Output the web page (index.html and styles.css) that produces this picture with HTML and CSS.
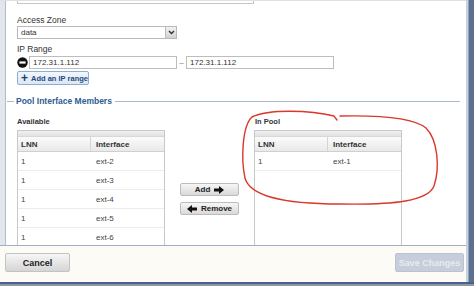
FILE: index.html
```html
<!DOCTYPE html>
<html lang="en">
<head>
    <meta charset="utf-8">
    <title>Edit Pool</title>
    <link rel="stylesheet" href="styles.css">
</head>
<body>
    <div class="screen">
        <div class="frame">
            <div class="main">
                <div class="pane">
                    <div class="gutter"></div>
                    <div class="content">
                        <div class="stub"></div>

                        <div class="label first">Access Zone</div>
                        <div class="select">
                            <span>data</span>
                            <span class="select-btn">
                                <svg width="7" height="5" viewBox="0 0 7 5"><path d="M1 1 L3.5 3.5 L6 1" fill="none" stroke="#333" stroke-width="1.4"/></svg>
                            </span>
                        </div>

                        <div class="label">IP Range</div>
                        <div class="ip-row">
                            <svg class="minus" width="11" height="11" viewBox="0 0 11 11"><circle cx="5.5" cy="5.5" r="5.2" fill="#111"/><rect x="2.4" y="4.4" width="6.2" height="2.2" fill="#fff"/></svg>
                            <div class="input">172.31.1.112</div>
                            <span class="dash">–</span>
                            <div class="input">172.31.1.112</div>
                        </div>
                        <button class="add-range"><span class="plus">+</span>Add an IP range</button>

                        <div class="legend">
                            <span class="legend-line short"></span>
                            <span class="legend-text">Pool Interface Members</span>
                            <span class="legend-line"></span>
                        </div>

                        <div class="members">
                            <div class="list">
                                <div class="list-title">Available</div>
                                <div class="table">
                                    <div class="table-top"></div>
                                    <div class="row head"><span class="c1">LNN</span><span class="c2">Interface</span></div>
                                    <div class="row"><span class="c1">1</span><span class="c2">ext-2</span></div>
                                    <div class="row"><span class="c1">1</span><span class="c2">ext-3</span></div>
                                    <div class="row"><span class="c1">1</span><span class="c2">ext-4</span></div>
                                    <div class="row"><span class="c1">1</span><span class="c2">ext-5</span></div>
                                    <div class="row"><span class="c1">1</span><span class="c2">ext-6</span></div>
                                </div>
                            </div>
                            <div class="moves">
                                <button class="move">Add
                                    <svg width="10" height="8" viewBox="0 0 10 8"><path d="M0 2.6 H5 V0 L10 4 L5 8 V5.4 H0 Z" fill="#111"/></svg>
                                </button>
                                <button class="move">
                                    <svg width="10" height="8" viewBox="0 0 10 8"><path d="M10 2.6 H5 V0 L0 4 L5 8 V5.4 H10 Z" fill="#111"/></svg>
                                    Remove</button>
                            </div>
                            <div class="list">
                                <div class="list-title pool">In Pool</div>
                                <div class="table">
                                    <div class="table-top"></div>
                                    <div class="row head"><span class="c1">LNN</span><span class="c2">Interface</span></div>
                                    <div class="row"><span class="c1">1</span><span class="c2">ext-1</span></div>
                                </div>
                            </div>
                        </div>
                    </div>
                </div>
                <div class="footer">
                    <button class="btn cancel">Cancel</button>
                    <button class="btn save" disabled>Save Changes</button>
                </div>
            </div>
            <div class="edge"></div>
        </div>
        <div class="bottom"></div>

        <!-- hand-drawn annotation over the screenshot -->
        <svg class="scribble" width="474" height="286" viewBox="0 0 474 286">
            <path d="M337 120 L334 116 C310 110 268 109 252 117 C242 126 241 160 245 178 C250 197 285 204 340 204 C395 205 428 201 434 186 C440 168 438 140 426 128 C414 118 385 115 340 116"
                  fill="none" stroke="#d9382b" stroke-width="1.4" stroke-linecap="round"/>
        </svg>
    </div>
</body>
</html>
```

FILE: styles.css
```css
* {
    margin: 0;
    padding: 0;
    box-sizing: border-box;
}
body {
    font-family: "Liberation Sans", Arial, sans-serif;
    font-size: 9px;
    color: #222;
    background: #fff;
    width: 474px;
    height: 286px;
    overflow: hidden;
}
.screen {
    position: relative;
    width: 474px;
    height: 286px;
}
.frame {
    display: flex;
    height: 282px;
}
.main {
    flex: 1;
    display: flex;
    flex-direction: column;
}
.edge {
    width: 8px;
    background: #5d718f;
    border-left: 2px solid #c4d2e1;
    box-shadow: inset 1px 0 0 #8ea5c2;
}
.bottom {
    height: 4px;
    background: #8e96a3;
    border-top: 2px solid #46628d;
}

/* scroll pane */
.pane {
    height: 246px;
    display: flex;
    overflow: hidden;
    border-top: 1px solid #e0e0e0;
    border-bottom: 1px solid #9db0c6;
}
.gutter {
    width: 6px;
    background: #e3e7ec;
    border-right: 1px solid #a9bdd3;
}
.content {
    flex: 1;
    padding-left: 11px;
    background: #fff;
}
.stub {
    width: 237px;
    height: 3px;
    border: 1px solid #c6c6c6;
    border-top: none;
}
.label {
    line-height: 11px;
    margin-top: 5px;
    font-size: 8.5px;
    color: #333;
}
.label.first {
    margin-top: 11px;
}
.select {
    width: 160px;
    height: 13px;
    border: 1px solid #b9b9b9;
    display: flex;
    align-items: center;
    justify-content: space-between;
    padding-left: 3px;
    font-size: 8px;
    color: #333;
}
.select-btn {
    width: 11px;
    height: 11px;
    background: linear-gradient(#f2f2f2, #d2d2d2);
    border-left: 1px solid #bcbcbc;
    display: flex;
    align-items: center;
    justify-content: center;
}
.ip-row {
    display: flex;
    align-items: center;
    margin-top: 1px;
    height: 13px;
}
.minus {
    margin-right: 1px;
}
.input {
    width: 148px;
    height: 13px;
    border: 1px solid #bdbdbd;
    padding-left: 3px;
    font-size: 8px;
    line-height: 11px;
    color: #333;
}
.dash {
    width: 9px;
    text-align: center;
    color: #777;
    font-size: 8px;
}
.add-range {
    margin-top: 2px;
    height: 14px;
    width: 72px;
    white-space: nowrap;
    font-family: inherit;
    font-size: 7.5px;
    font-weight: bold;
    color: #1f4a80;
    background: linear-gradient(#f3f7fc, #dbe6f3);
    border: 1px solid #8eaed1;
    border-radius: 2px;
    display: flex;
    align-items: center;
    padding-left: 3px;
}
.plus {
    font-size: 12px;
    line-height: 10px;
    margin-right: 3px;
    color: #1c3f6e;
}
.legend {
    display: flex;
    align-items: center;
    margin: 10px 6px 0 -10px;
    height: 12px;
}
.legend-line {
    flex: 1;
    height: 1px;
    background: #a7bbd0;
}
.legend-line.short {
    flex: none;
    width: 7px;
}
.legend-text {
    font-weight: bold;
    font-size: 8.5px;
    color: #2e5d92;
    padding: 0 3px 0 2px;
}
.members {
    display: flex;
    margin-top: 9px;
}
.list {
    width: 148px;
}
.list-title {
    font-size: 7.5px;
    font-weight: bold;
    line-height: 11px;
    color: #333;
    margin-bottom: 3px;
}
.list-title.pool {
    padding-left: 1px;
}
.table {
    border: 1px solid #c9c9c9;
    height: 140px;
}
.table-top {
    height: 6px;
    background: linear-gradient(#f0f0f0, #e2e2e2);
    border-bottom: 1px solid #d8d8d8;
}
.row {
    display: flex;
    height: 19px;
    align-items: center;
    border-bottom: 1px solid #ececec;
    font-size: 8px;
    color: #444;
}
.row.head {
    height: 15px;
    font-weight: bold;
    color: #333;
    background: linear-gradient(#fbfbfb, #e9e9e9);
    border-bottom: 1px solid #d0d0d0;
}
.c1 {
    width: 73px;
    padding-left: 3px;
    align-self: stretch;
    display: flex;
    align-items: center;
}
.c2 {
    padding-left: 5px;
}
.row.head .c1 {
    border-right: 1px solid #d4d4d4;
}
.moves {
    width: 89px;
    display: flex;
    flex-direction: column;
    align-items: center;
    gap: 6px;
    padding-top: 67px;
}
.move {
    width: 59px;
    height: 13px;
    font-family: inherit;
    font-size: 8px;
    font-weight: bold;
    color: #222;
    background: linear-gradient(#f6f6f6, #d9d9d9);
    border: 1px solid #bcbcbc;
    border-radius: 2px;
    display: flex;
    align-items: center;
    justify-content: center;
    gap: 4px;
}

/* footer */
.footer {
    flex: 1;
    background: #fcfbf6;
    display: flex;
    justify-content: space-between;
    align-items: flex-start;
    padding: 7px 2px 0 5px;
}
.btn {
    height: 19px;
    font-family: inherit;
    font-size: 9px;
    font-weight: bold;
    border-radius: 2px;
}
.cancel {
    width: 65px;
    color: #222;
    background: linear-gradient(#f6f6f6, #d5d5d5);
    border: 1px solid #c3c3c3;
}
.save {
    width: 69px;
    color: #e6ebf1;
    background: #c6cedb;
    border: 1px solid #b9c3d1;
}
.scribble {
    position: absolute;
    left: 0;
    top: 0;
    pointer-events: none;
}
```
